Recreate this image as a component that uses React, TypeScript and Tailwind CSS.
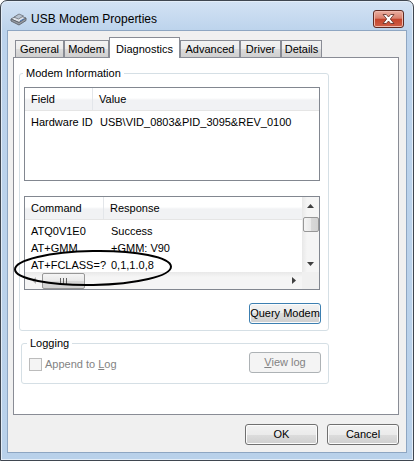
import React from 'react';

const btn =
    "flex items-center justify-center rounded-[3px] border border-[#707070] bg-[linear-gradient(to_bottom,#f2f2f2_0%,#ebebeb_50%,#dddddd_50%,#cfcfcf_100%)] shadow-[inset_0_0_0_1px_#fcfcfc] text-black";

function Tab({ label, width, selected }: { label: string; width: number; selected?: boolean }) {
    if (selected) {
        return (
            <div
                className="relative z-10 -mb-px flex h-[21px] items-start justify-center border border-b-0 border-[#898c95] bg-white pt-[3px]"
                style={{ width }}
            >
                {label}
            </div>
        );
    }
    return (
        <div
            className="flex h-[17px] items-center justify-center border border-b-0 border-[#898c95] bg-[linear-gradient(to_bottom,#f2f2f2_0%,#ebebeb_50%,#dddddd_50%,#cfcfcf_100%)] pt-px"
            style={{ width }}
        >
            {label}
        </div>
    );
}

function GroupBox({
    label,
    className,
    labelLeft,
    children
}: {
    label: string;
    className: string;
    labelLeft: string;
    children: React.ReactNode;
}) {
    return (
        <div className={`relative rounded-[3px] border border-[#d5dfe5] ${className}`}>
            <span className={`absolute top-[-8px] ${labelLeft} bg-white px-[3px] leading-[14px]`}>{label}</span>
            {children}
        </div>
    );
}

function ListHeader({ cols }: { cols: [string, number][] }) {
    return (
        <div className="flex h-[23px] shrink-0 border-b border-[#e5e5e5] bg-[linear-gradient(to_bottom,#ffffff_0%,#ffffff_45%,#f1f2f4_55%,#f1f2f4_100%)]">
            {cols.map(([name, w], i) => (
                <div
                    key={i}
                    className={`flex items-center pl-[6px] ${i === 0 ? 'border-r border-[#e3e6ea]' : 'flex-1'}`}
                    style={i === 0 ? { width: w } : undefined}
                >
                    {name}
                </div>
            ))}
        </div>
    );
}

const thumb = 'rounded-[2px] border border-[#979797]';

export default function App() {
    const commands: [string, string][] = [
        ['ATQ0V1E0', 'Success'],
        ['AT+GMM', '+GMM: V90'],
        ['AT+FCLASS=?', '0,1,1.0,8']
    ];

    return (
        <div className="relative flex h-[461px] w-[414px] flex-col rounded-t-[7px] border border-[#3f4650] bg-[linear-gradient(to_bottom,#d3e2f4_0px,#bcd3ec_30px,#b9d1ea_100%)] font-['Liberation_Sans',Arial,sans-serif] text-[11px] text-black shadow-[inset_0_0_0_1px_#e3edf8]">
            {/* title bar */}
            <div className="flex h-[29px] shrink-0 items-center pl-[9px] pr-[9px] pt-[6px]">
                <svg width="17" height="15" viewBox="0 0 17 15" className="mr-[4px]">
                    <path d="M1 8 L8 4 L16 7 L9 11.5 Z" fill="#dfe3e8" stroke="#6b7078" strokeWidth="0.9" />
                    <path d="M1 8 L1 10 L9 14 L16 9.5 L16 7 L9 11.5 Z" fill="#969ca4" stroke="#5b6068" strokeWidth="0.9" />
                    <path d="M4 6.2 L9 3 L13.5 5 L8.5 8 Z" fill="#b8c3d0" stroke="#6b7078" strokeWidth="0.8" />
                    <path d="M10 10 L14 7.8" stroke="#4c79b8" strokeWidth="1" />
                </svg>
                <span className="text-[12px] leading-none text-black">USB Modem Properties</span>
                <div className="ml-auto flex h-[18px] w-[31px] items-center justify-center rounded-[3px] border border-[#5f2a22] bg-[linear-gradient(to_bottom,#eab0a3_0%,#d9806d_45%,#c4442c_52%,#cf5f47_100%)] shadow-[inset_0_0_0_1px_#efb9ad]">
                    <svg width="13" height="10" viewBox="0 0 13 10">
                        <path
                            d="M1 0.5 H4.3 L6.5 3 L8.7 0.5 H12 L8.3 5 L12 9.5 H8.7 L6.5 7 L4.3 9.5 H1 L4.7 5 Z"
                            fill="#ffffff"
                            stroke="#5a2a22"
                            strokeWidth="0.8"
                        />
                    </svg>
                </div>
            </div>

            {/* client area */}
            <div className="mx-[6px] mb-[7px] flex flex-1 flex-col border border-[#8ea6c2] bg-[#f0f0f0] pl-[5px] pr-[7px] pt-[6px]">
                <div className="flex items-end pl-[2px]">
                    <Tab label="General" width={49} />
                    <Tab label="Modem" width={45} />
                    <Tab label="Diagnostics" width={71} selected />
                    <Tab label="Advanced" width={60} />
                    <Tab label="Driver" width={41} />
                    <Tab label="Details" width={41} />
                </div>

                <div className="flex h-[358px] flex-col border border-[#898c95] bg-white pl-[5px] pt-[15px]">
                    <GroupBox label="Modem Information" className="w-[310px] pb-[6px] pl-[4px] pr-[7px] pt-[13px]" labelLeft="left-[3px]">
                        {/* field list */}
                        <div className="flex h-[94px] w-[296px] flex-col border border-[#828790] bg-white">
                            <ListHeader cols={[['Field', 68], ['Value', 0]]} />
                            <div className="flex h-[17px] mt-[3px] items-center">
                                <div className="w-[68px] pl-[6px]">Hardware ID</div>
                                <div className="pl-[7px]">USB\VID_0803&amp;PID_3095&amp;REV_0100</div>
                            </div>
                        </div>

                        {/* command list */}
                        <div className="mt-[15px] flex h-[94px] w-[296px] border border-[#828790] bg-white">
                            <div className="flex min-w-0 flex-1 flex-col">
                                <ListHeader cols={[['Command', 79], ['Response', 0]]} />
                                <div className="flex-1 overflow-hidden pt-[3px]">
                                    {commands.map(([c, r]) => (
                                        <div key={c} className="flex h-[17px] items-center">
                                            <div className="w-[79px] pl-[6px]">{c}</div>
                                            <div className="pl-[7px]">{r}</div>
                                        </div>
                                    ))}
                                </div>
                                {/* horizontal scrollbar */}
                                <div className="flex h-[17px] shrink-0 items-center bg-[linear-gradient(to_bottom,#e8e8e8_0%,#f5f5f5_30%,#f5f5f5_100%)]">
                                    <div className="flex w-[17px] justify-center">
                                        <svg width="4" height="7" viewBox="0 0 4 7">
                                            <path d="M4 0 L0 3.5 L4 7 Z" fill="#b5b5b5" />
                                        </svg>
                                    </div>
                                    <div className={`${thumb} flex h-[16px] w-[43px] items-center justify-center gap-[2px] bg-[linear-gradient(to_bottom,#f4f4f4_0%,#e9e9e9_50%,#d8d8d8_51%,#d2d2d2_100%)]`}>
                                        <div className="h-[6px] w-px bg-[#606060]" />
                                        <div className="h-[6px] w-px bg-[#606060]" />
                                        <div className="h-[6px] w-px bg-[#606060]" />
                                    </div>
                                    <div className="ml-auto flex w-[17px] justify-center">
                                        <svg width="4" height="7" viewBox="0 0 4 7">
                                            <path d="M0 0 L4 3.5 L0 7 Z" fill="#404040" />
                                        </svg>
                                    </div>
                                </div>
                            </div>
                            {/* vertical scrollbar */}
                            <div className="flex w-[17px] shrink-0 flex-col">
                                <div className="flex flex-1 flex-col items-center bg-[linear-gradient(to_right,#e8e8e8_0%,#f5f5f5_30%,#f5f5f5_100%)]">
                                    <div className="flex h-[17px] items-center">
                                        <svg width="7" height="4" viewBox="0 0 7 4">
                                            <path d="M0 4 L3.5 0 L7 4 Z" fill="#404040" />
                                        </svg>
                                    </div>
                                    <div className={`${thumb} mt-[3px] h-[15px] w-[16px] bg-[linear-gradient(to_right,#f4f4f4_0%,#e9e9e9_50%,#d8d8d8_51%,#d2d2d2_100%)]`} />
                                    <div className="mt-auto flex h-[17px] items-center">
                                        <svg width="7" height="4" viewBox="0 0 7 4">
                                            <path d="M0 0 L3.5 4 L7 0 Z" fill="#404040" />
                                        </svg>
                                    </div>
                                </div>
                                <div className="h-[17px] bg-[#f0f0f0]" />
                            </div>
                        </div>

                        <div className="mt-[13px] flex justify-end">
                            <div className={`${btn} h-[21px] w-[72px] !border-[#3c7fb1] shadow-[inset_0_0_0_1px_#48d2f8]`}>Query Modem</div>
                        </div>
                    </GroupBox>

                    <GroupBox label="Logging" className="ml-[2px] mt-[12px] flex h-[41px] w-[308px] items-start justify-between pl-[7px] pr-[7px] pt-[8px]" labelLeft="left-[5px]">
                        <div className="mt-[4px] flex items-center">
                            <div className="h-[13px] w-[13px] border border-[#bcbcbc] bg-[#f4f4f4]" />
                            <span className="ml-[3px] text-[#838383]">
                                Append to <span className="underline">L</span>og
                            </span>
                        </div>
                        <div className="flex h-[21px] w-[72px] items-center justify-center rounded-[3px] border border-[#adb2b5] bg-[#f4f4f4] text-[#838383]">
                            <span>
                                <span className="underline">V</span>iew log
                            </span>
                        </div>
                    </GroupBox>
                </div>

                <div className="mt-[9px] flex justify-end gap-[9px]">
                    <div className={`${btn} h-[21px] w-[73px]`}>OK</div>
                    <div className={`${btn} h-[21px] w-[72px]`}>Cancel</div>
                </div>
            </div>

            {/* hand-drawn highlight ellipse */}
            <svg className="absolute left-[11px] top-[247px]" width="162" height="40" viewBox="0 0 162 40">
                <ellipse cx="81" cy="20" rx="78" ry="17" fill="none" stroke="#000" strokeWidth="2" transform="rotate(-1 81 20)" />
            </svg>
        </div>
    );
}
